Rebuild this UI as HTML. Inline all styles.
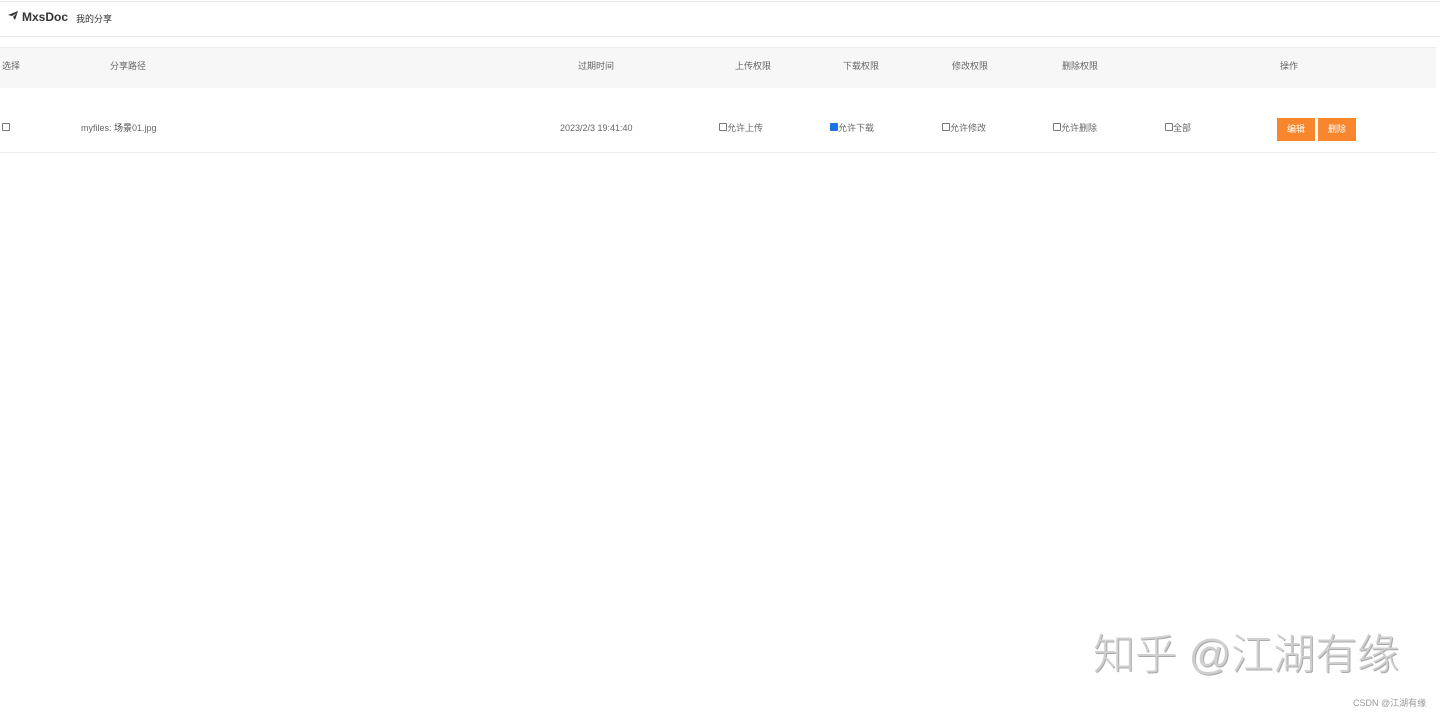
<!DOCTYPE html>
<html><head><meta charset="utf-8"><style>
body{margin:0;width:1440px;height:713px;background:#fff;font-family:"Liberation Sans","Noto Sans CJK SC",sans-serif;position:relative;overflow:hidden;color:#666;font-size:9px}
.a{position:absolute;white-space:nowrap;line-height:12px}
.cb{display:inline-block;width:6px;height:6px;border:1px solid #777;border-radius:1px;vertical-align:0px;background:#fff}
.cbc{background:#1a73e8;border-color:#1a73e8}
.btn{position:absolute;top:118px;height:23px;width:38px;background:#f7862d;color:#fff;font-size:9px;text-align:center;line-height:23px}
</style></head><body>
<div class="a" style="left:0;top:1px;width:1440px;height:1px;background:#e8e8e8"></div>
<svg class="a" style="left:8px;top:11px" width="11" height="10" viewBox="0 0 11 10"><path d="M0 4 L10 0 L7 9 L5 6 L9 2 L4 5 Z" fill="#333"/></svg>
<div class="a" style="left:22px;top:11px;font-size:12px;font-weight:bold;color:#333">MxsDoc</div>
<div class="a" style="left:76px;top:13px;font-size:9px;color:#333">我的分享</div>
<div class="a" style="left:0;top:36px;width:1440px;height:1px;background:#e6e6e6"></div>
<div class="a" style="left:0;top:47px;width:1436px;height:40px;background:#f7f7f7;border-top:1px solid #eee"></div>
<div class="a" style="left:2px;top:60px">选择</div>
<div class="a" style="left:110px;top:60px">分享路径</div>
<div class="a" style="left:578px;top:60px">过期时间</div>
<div class="a" style="left:735px;top:60px">上传权限</div>
<div class="a" style="left:843px;top:60px">下载权限</div>
<div class="a" style="left:952px;top:60px">修改权限</div>
<div class="a" style="left:1062px;top:60px">删除权限</div>
<div class="a" style="left:1280px;top:60px">操作</div>
<div class="a" style="left:2px;top:122px"><span class="cb"></span></div>
<div class="a" style="left:81px;top:122px">myfiles: <span style="color:#444">场景</span>01.jpg</div>
<div class="a" style="left:560px;top:122px">2023/2/3 19:41:40</div>
<div class="a" style="left:719px;top:122px"><span class="cb"></span>允许上传</div>
<div class="a" style="left:830px;top:122px"><span class="cb cbc"></span>允许下载</div>
<div class="a" style="left:942px;top:122px"><span class="cb"></span>允许修改</div>
<div class="a" style="left:1053px;top:122px"><span class="cb"></span>允许删除</div>
<div class="a" style="left:1165px;top:122px"><span class="cb"></span>全部</div>
<div class="btn" style="left:1277px">编辑</div>
<div class="btn" style="left:1318px">删除</div>
<div class="a" style="left:0;top:152px;width:1436px;height:1px;background:#eee"></div>
<div class="a" style="left:1093px;top:630px;font-size:42px;line-height:50px;color:#d0d0d0;text-shadow:1px 1px 0 #aaa;font-weight:300">知乎 @江湖有缘</div>
<div class="a" style="left:1353px;top:697px;font-size:9px;color:#999">CSDN @江湖有缘</div>
</body></html>
